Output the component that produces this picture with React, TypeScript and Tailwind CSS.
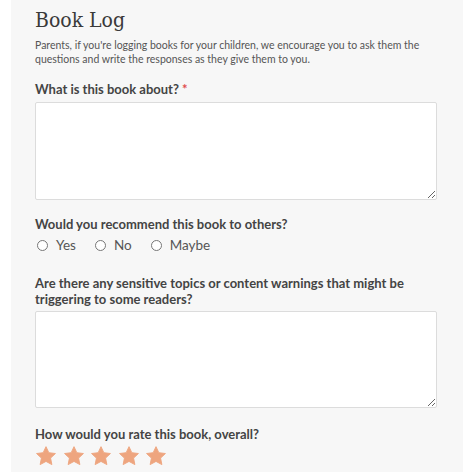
import React from 'react';

const lato = { fontFamily: 'Lato, "Noto Sans", sans-serif' };

function Star() {
  return (
    <svg viewBox="0 0 24 24" className="w-[22px] h-[22px]" fill="#eea57f">
      <path d="M12 1.8l3.1 6.6 7.2.9-5.3 5 1.4 7.1L12 17.9l-6.4 3.5 1.4-7.1-5.3-5 7.2-.9z" strokeLinejoin="round" stroke="#eea57f" strokeWidth="1" />
    </svg>
  );
}

function Radio({ label }: { label: string }) {
  return (
    <label className="flex items-center gap-[8px] text-[13.5px] text-[#555]">
      <span className="w-[11px] h-[11px] rounded-full border border-[#777] bg-white" />
      {label}
    </label>
  );
}

export default function App() {
  return (
    <div className="min-h-screen bg-white px-[11px]" style={lato}>
      <div className="bg-[#f7f7f7] h-[472px] px-[24px] pt-[5px]">
        <h1
          className="text-[21px] leading-[30px] text-[#3a3a3a] font-stretch-condensed"
          style={{ fontFamily: '"DejaVu Serif Condensed", "DejaVu Serif", serif' }}
        >
          Book Log
        </h1>
        <p className="mt-[3px] text-[10.5px] leading-[14px] text-[#555]">
          Parents, if you're logging books for your children, we encourage you to ask them the questions and write the responses as they give them to you.
        </p>

        <div className="mt-[14px] text-[13px] font-bold text-[#444] leading-[18px]">
          What is this book about? <span className="text-[#e04b4b]">*</span>
        </div>
        <textarea className="mt-[4px] block w-[402px] h-[98px] bg-white border border-[#dcdcdc] rounded-[2px]" />

        <div className="mt-[15px] text-[13px] font-bold text-[#444] leading-[18px]">
          Would you recommend this book to others?
        </div>
        <div className="mt-[2px] flex gap-[19px] pl-[2px]">
          <Radio label="Yes" />
          <Radio label="No" />
          <Radio label="Maybe" />
        </div>

        <div className="mt-[20px] text-[13px] font-bold text-[#444] leading-[16px] pr-[30px]">
          Are there any sensitive topics or content warnings that might be triggering to some readers?
        </div>
        <textarea className="mt-[4px] block w-[402px] h-[97px] bg-white border border-[#dcdcdc] rounded-[2px]" />

        <div className="mt-[17px] text-[13px] font-bold text-[#444] leading-[18px]">
          How would you rate this book, overall?
        </div>
        <div className="mt-[2px] flex gap-[5.5px]">
          <Star />
          <Star />
          <Star />
          <Star />
          <Star />
        </div>
      </div>
    </div>
  );
}
